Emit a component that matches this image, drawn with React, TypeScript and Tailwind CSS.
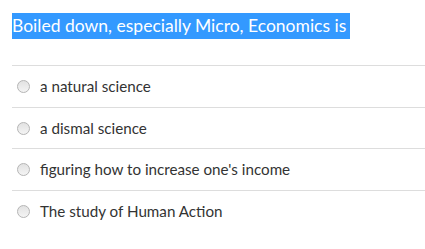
import React from "react";

const options = [
  "a natural science",
  "a dismal science",
  "figuring how to increase one's income",
  "The study of Human Action",
];

export default function App() {
  return (
    <div className="w-[425px] h-[249px] bg-white pl-3 pt-[13px]" style={{ fontFamily: "Lato, 'Open Sans', sans-serif" }}>
      <div>
        <span className="inline-block bg-[#3399ff] text-white text-[17.5px] leading-[26px] pr-[4px]">
          Boiled down, especially Micro, Economics is
        </span>
      </div>
      <div className="mt-[26px]">
        {options.map((o) => (
          <div key={o} className="flex items-center h-[41.7px] border-t border-[#dddddd] text-[15.2px] text-[#333333]">
            <span className="ml-[5px] w-[13px] h-[13px] rounded-full border border-[#b5b5b5] bg-gradient-to-b from-[#e2e2e2] to-[#f4f4f4]" />
            <span className="ml-[10px]">{o}</span>
          </div>
        ))}
      </div>
    </div>
  );
}
